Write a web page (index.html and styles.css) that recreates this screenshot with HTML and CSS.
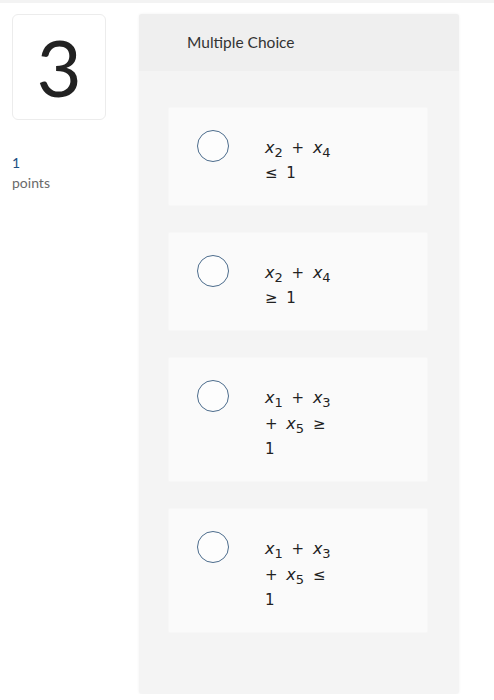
FILE: index.html
```html
<!DOCTYPE html>
<html>
<head>
<meta charset="utf-8">
<link rel="stylesheet" href="styles.css">
</head>
<body>
<div class="page">
  <aside class="side">
    <div class="qnum">3</div>
    <div class="pts-value">1</div>
    <div class="pts-label">points</div>
  </aside>
  <section class="panel">
    <header class="panel-head">Multiple Choice</header>
    <div class="panel-body">
      <div class="card">
        <span class="radio"></span>
        <div class="math"><span class="t"><i>x</i><sub>2</sub></span> <span class="t">+</span> <span class="t"><i>x</i><sub>4</sub></span> <span class="t">≤</span> <span class="t">1</span></div>
      </div>
      <div class="card">
        <span class="radio"></span>
        <div class="math"><span class="t"><i>x</i><sub>2</sub></span> <span class="t">+</span> <span class="t"><i>x</i><sub>4</sub></span> <span class="t">≥</span> <span class="t">1</span></div>
      </div>
      <div class="card">
        <span class="radio"></span>
        <div class="math"><span class="t"><i>x</i><sub>1</sub></span> <span class="t">+</span> <span class="t"><i>x</i><sub>3</sub></span> <span class="t">+</span> <span class="t"><i>x</i><sub>5</sub></span> <span class="t">≥</span> <span class="t">1</span></div>
      </div>
      <div class="card">
        <span class="radio"></span>
        <div class="math"><span class="t"><i>x</i><sub>1</sub></span> <span class="t">+</span> <span class="t"><i>x</i><sub>3</sub></span> <span class="t">+</span> <span class="t"><i>x</i><sub>5</sub></span> <span class="t">≤</span> <span class="t">1</span></div>
      </div>
    </div>
  </section>
</div>
</body>
</html>
```
FILE: styles.css
```css
html, body {
  margin: 0;
  padding: 0;
  background: #ffffff;
}
body {
  border-top: 3px solid #f3f3f3;
  font-family: "Lato", "Open Sans", sans-serif;
  color: #333;
}
.page {
  display: flex;
  align-items: flex-start;
  gap: 33px;
  padding: 11px 0 0 12px;
}
.side {
  width: 94px;
  flex: none;
}
.qnum {
  box-sizing: border-box;
  width: 94px;
  height: 106px;
  border: 1px solid #ececec;
  border-radius: 6px;
  display: flex;
  align-items: center;
  justify-content: center;
  font-size: 78px;
  font-weight: 400;
  color: #222;
  line-height: 1;
}
.pts-value {
  margin-top: 33px;
  font-size: 14px;
  line-height: 20px;
  color: #1d4f82;
}
.pts-label {
  font-size: 14px;
  line-height: 20px;
  color: #6a6a6a;
}
.panel {
  width: 320px;
  flex: none;
  background: #f4f4f4;
  border-radius: 3px;
  box-shadow: 0 0 3px rgba(0,0,0,0.06);
}
.panel-head {
  height: 57px;
  box-sizing: border-box;
  padding: 18px 0 0 48px;
  background: #efefef;
  font-size: 15.5px;
  line-height: 20px;
  color: #333;
  border-radius: 3px 3px 0 0;
}
.panel-body {
  padding: 37px 32px 62px 30px;
  display: flex;
  flex-direction: column;
  gap: 28px;
}
.card {
  display: flex;
  align-items: flex-start;
  background: #fafafa;
  padding: 22px 0 19px 28px;
  box-shadow: 0 0 2px #ffffff;
}
.radio {
  box-sizing: border-box;
  width: 32px;
  height: 32px;
  border: 1.5px solid #4c6c8c;
  border-radius: 50%;
  background: #fdfdfd;
  flex: none;
}
.math {
  margin: 5px 0 0 36px;
  width: 76px;
  font-family: "DejaVu Sans", sans-serif;
  font-size: 15px;
  line-height: 25px;
  color: #222;
  word-spacing: 4px;
}
.math .t {
  word-spacing: 0;
}
.math i {
  font-style: italic;
  font-size: 16px;
}
.math sub {
  font-size: 13px;
  vertical-align: -4px;
  line-height: 0;
}
```
